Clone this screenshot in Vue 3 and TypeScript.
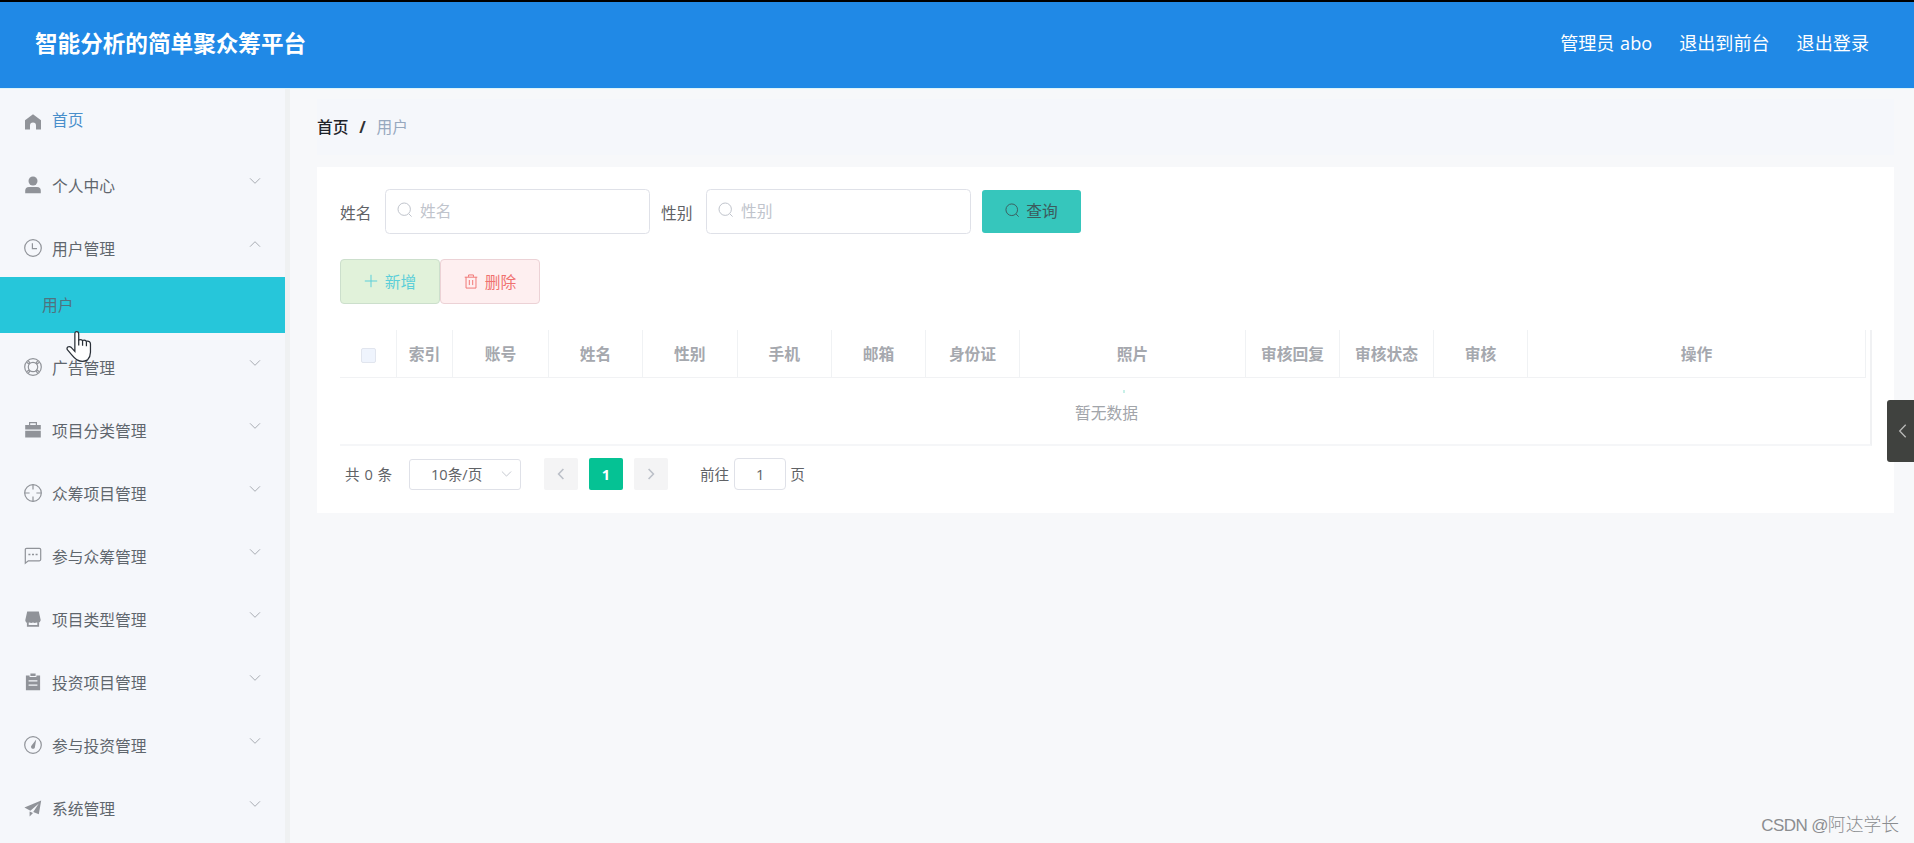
<script setup lang="ts">
import { ref } from 'vue'

interface MenuItem {
  label: string
  icon: string
  open?: boolean
  children?: string[]
}

interface Column {
  label: string
  width: number
}

const menu: MenuItem[] = [
  { label: '个人中心', icon: 'user' },
  { label: '用户管理', icon: 'clock', open: true, children: ['用户'] },
  { label: '广告管理', icon: 'help' },
  { label: '项目分类管理', icon: 'case' },
  { label: '众筹项目管理', icon: 'aim' },
  { label: '参与众筹管理', icon: 'chat' },
  { label: '项目类型管理', icon: 'shop' },
  { label: '投资项目管理', icon: 'order' },
  { label: '参与投资管理', icon: 'odometer' },
  { label: '系统管理', icon: 'promotion' },
]

const columns: Column[] = [
  { label: '索引', width: 56 },
  { label: '账号', width: 96 },
  { label: '姓名', width: 94 },
  { label: '性别', width: 94.5 },
  { label: '手机', width: 94.5 },
  { label: '邮箱', width: 94 },
  { label: '身份证', width: 94 },
  { label: '照片', width: 226 },
  { label: '审核回复', width: 94 },
  { label: '审核状态', width: 94 },
  { label: '审核', width: 94 },
  { label: '操作', width: 338 },
]

const name = ref('')
const gender = ref('')
const page = ref('1')
</script>

<template>
  <div class="app">
    <header class="topbar">
      <h1>智能分析的简单聚众筹平台</h1>
      <nav class="links">
        <span>管理员 abo</span>
        <span>退出到前台</span>
        <span>退出登录</span>
      </nav>
    </header>

    <div class="body">
      <aside class="sidebar">
        <div class="item home">
          <svg class="ico" viewBox="0 0 18 18"><path class="f" d="M9 1.2 17 7.2V16.6H12V12.4A3 3 0 0 0 6 12.4V16.6H1V7.2Z" /></svg>
          <span class="label">首页</span>
        </div>
        <template v-for="item in menu" :key="item.label">
          <div class="item">
            <svg class="ico" viewBox="0 0 18 18">
              <template v-if="item.icon === 'user'">
                <circle class="f" cx="9" cy="5" r="4.5" />
                <path class="f" d="M1.2 17.2V14.8Q1.2 11 5 11H13Q16.8 11 16.8 14.8V17.2Z" />
              </template>
              <template v-else-if="item.icon === 'clock'">
                <circle cx="9" cy="9" r="8.3" /><path d="M8.4 4.2V9.6H13" />
              </template>
              <template v-else-if="item.icon === 'help'">
                <circle cx="9" cy="9" r="8.3" /><circle cx="9" cy="9" r="4.7" />
                <path d="M2.6 4.2 5.4 6.2M4.2 2.6 6.2 5.4M13.8 2.6 11.8 5.4M15.4 4.2 12.6 6.2M2.6 13.8 5.4 11.8M4.2 15.4 6.2 12.6M13.8 15.4 11.8 12.6M15.4 13.8 12.6 11.8" />
              </template>
              <template v-else-if="item.icon === 'case'">
                <path d="M5.6 4.5V1.7H12.4V4.5" />
                <path class="f" d="M1.2 4H16.8V8.6H1.2ZM1.2 9.8H16.8V16.6H1.2Z" />
              </template>
              <template v-else-if="item.icon === 'aim'">
                <circle cx="9" cy="9" r="8.3" /><path d="M9 .7V5.6M9 12.4V17.3M.7 9H5.6M12.4 9H17.3" />
              </template>
              <template v-else-if="item.icon === 'chat'">
                <path d="M1.3 16.2V2.6Q1.3 1.4 2.6 1.4H15.4Q16.7 1.4 16.7 2.6V12.6Q16.7 13.8 15.4 13.8H4.3Z" />
                <path class="f" d="M4.4 6.7H6.4V8.3H4.4ZM8 6.7H10V8.3H8ZM11.6 6.7H13.6V8.3H11.6Z" />
              </template>
              <template v-else-if="item.icon === 'shop'">
                <path class="f" d="M3.2 1.6H14.8L16.8 10.4H1.2ZM1.4 10.2H16.6Q16.2 13 14.2 13L12.6 12.4 10.8 13 9 12.4 7.2 13 5.4 12.4 3.8 13Q1.8 13 1.4 11Z" />
                <path stroke-width="1.8" d="M3.8 12.5V15.8H14.2V12.5" />
              </template>
              <template v-else-if="item.icon === 'order'">
                <path class="f" fill-rule="evenodd" d="M1.9 2.4H5.6V4H12.4V2.4H16.1V17.3H1.9ZM4.6 7.2H13.4V8.4H4.6ZM4.6 11.6H13.4V12.8H4.6ZM6.4.4H11.6V3H6.4Z" />
              </template>
              <template v-else-if="item.icon === 'odometer'">
                <circle cx="9" cy="9" r="8.3" />
                <path class="f" d="M12.2 3.4 11 10.6A2 2 0 1 1 7.6 9.4Z" />
              </template>
              <template v-else>
                <path class="f" d="M.4 8.6 17.2 1.4 14.8 15.2 9.2 13 14.8 4.6 6.4 11.7ZM5.6 12.6 9 14 5.6 17.4Z" />
              </template>
            </svg>
            <span class="label">{{ item.label }}</span>
            <svg class="chev" :class="{ up: item.open }" viewBox="0 0 12 8"><path d="M1 1.3 6 6.3 11 1.3" /></svg>
          </div>
          <template v-if="item.open">
            <div v-for="child in item.children" :key="child" class="sub">{{ child }}</div>
          </template>
        </template>
      </aside>

      <main class="main">
        <div class="crumbs">
          <span class="root">首页</span><span class="sep">/</span><span class="here">用户</span>
        </div>

        <section class="panel">
          <form class="search" @submit.prevent>
            <label>姓名</label>
            <div class="field">
              <svg class="mag" viewBox="0 0 16 16"><circle cx="7.2" cy="7.2" r="6.2" /><path d="M11.8 11.8 14.6 14.6" /></svg>
              <input v-model="name" placeholder="姓名" />
            </div>
            <label>性别</label>
            <div class="field">
              <svg class="mag" viewBox="0 0 16 16"><circle cx="7.2" cy="7.2" r="6.2" /><path d="M11.8 11.8 14.6 14.6" /></svg>
              <input v-model="gender" placeholder="性别" />
            </div>
            <button class="query" type="submit">
              <svg class="mag" viewBox="0 0 16 16"><circle cx="7.2" cy="7.2" r="6.2" /><path d="M11.8 11.8 14.6 14.6" /></svg>
              查询
            </button>
          </form>

          <div class="actions">
            <button class="add">
              <svg viewBox="0 0 14 14"><path d="M7 .8V13.2M.8 7H13.2" /></svg>
              新增
            </button>
            <button class="del">
              <svg viewBox="0 0 14 16"><path d="M.3 3.4H13.7M4.4 3V1H9.6V3M1.7 3.4V15H12.3V3.4M5.2 6.4V11.8M8.8 6.4V11.8" /></svg>
              删除
            </button>
          </div>

          <div class="table">
            <div class="thead">
              <div class="th check"><i class="box"></i></div>
              <div v-for="col in columns" :key="col.label" class="th" :style="{ width: col.width + 'px' }">{{ col.label }}</div>
            </div>
            <div class="empty">暂无数据<i class="speck"></i></div>
          </div>

          <div class="pager">
            <span class="total">共 0 条</span>
            <div class="size">
              <span>10条/页</span>
              <svg viewBox="0 0 12 8"><path d="M1 1.3 6 6.3 11 1.3" /></svg>
            </div>
            <button class="pg"><svg viewBox="0 0 8 12"><path d="M6.4 1 1.6 6 6.4 11" /></svg></button>
            <button class="pg on">1</button>
            <button class="pg"><svg viewBox="0 0 8 12"><path d="M1.6 1 6.4 6 1.6 11" /></svg></button>
            <span class="goto">前往</span>
            <input v-model="page" class="num" />
            <span class="unit">页</span>
          </div>
        </section>
      </main>
    </div>

    <div class="drawer"><svg viewBox="0 0 8 14"><path d="M7.2 .8 1.2 7 7.2 13.2" /></svg></div>
    <svg class="cursor" viewBox="0 0 27 34">
      <path d="M9.2 21.5V3.4Q9.2 1 11.2 1Q13.2 1 13.2 3.4V9.8Q15.4 8.6 17.2 10.2Q19.4 9.2 21.2 11Q23 10.4 24.4 11.6Q25.4 12.6 25.4 14V22.5Q25.4 27 22.4 30.4Q17 33.4 11.5 30.4Q8.6 28.4 6.2 25.4L1.6 20Q.4 18.2 1.8 17Q3.6 15.8 5.6 17.6Z" />
      <path d="M13.2 9.8V15.4M17.2 10.2V15.8M21.2 11V16.2" />
    </svg>
    <div class="mark"><span class="latin">CSDN @</span>阿达学长</div>
  </div>
</template>

<style>
body {
  background: #f7f8fa;
  overflow: hidden;
}
</style>

<style scoped>
* {
  box-sizing: border-box;
}
.app {
  position: relative;
  height: 843px;
  overflow: hidden;
  background: #f7f8fa;
  border-top: 2px solid #000;
  font-family: 'Open Sans', 'Noto Sans CJK SC', sans-serif;
  font-size: 15.75px;
  color: #606266;
}
svg {
  fill: none;
  stroke: currentColor;
  flex: none;
}
input,
button {
  font: inherit;
  outline: none;
  padding: 0;
}
.topbar {
  display: flex;
  align-items: center;
  justify-content: space-between;
  height: 86px;
  padding: 0 45px 2px 35px;
  background: #2089e6;
  color: #fff;
}
h1 {
  margin: 0;
  font-size: 22.6px;
  line-height: 30px;
  font-weight: 700;
}
.links {
  display: flex;
  gap: 27px;
  margin-top: -4px;
  font-size: 18.1px;
  word-spacing: 1px;
}
.body {
  display: flex;
  height: 755px;
  border-top: 1px solid #dcf4fa;
}
.sidebar {
  flex: none;
  width: 290px;
  background: #f5f7fb;
  border-right: 5px solid #eff1f2;
}
.item {
  display: flex;
  align-items: center;
  height: 63px;
  padding: 0 24px;
  color: #5f666d;
}
.home {
  height: 62px;
}
.home .label {
  margin-top: -1px;
  color: #4a8fcb;
}
.home .ico {
  margin-top: 3px;
}
.ico {
  width: 18px;
  height: 18px;
  margin-top: 5px;
  color: #909399;
  stroke-width: 1.2;
}
.ico .f {
  fill: currentColor;
  stroke: none;
}
.label {
  flex: 1;
  margin: 7px 0 0 10px;
  line-height: 24px;
}
.chev {
  width: 12px;
  height: 8px;
  margin: -3px 0 0;
  color: #a9adb3;
}
.chev.up {
  transform: rotate(180deg);
}
.sub {
  height: 56px;
  padding-left: 42px;
  line-height: 57px;
  background: #26c6da;
  color: #50727f;
}
.main {
  flex: 1;
  padding: 10px 20px 0 27px;
}
.crumbs {
  display: flex;
  align-items: center;
  height: 56px;
  background: #f5f7fb;
  line-height: 24px;
}
.root,
.sep {
  font-weight: 700;
  color: #303133;
}
.root {
  font-weight: 500;
  color: #1f2329;
}
.sep {
  width: 28px;
  text-align: center;
}
.here {
  color: #97a8be;
}
.panel {
  height: 346px;
  margin-top: 12px;
  padding: 22px 22px 0 23px;
  background: #fff;
}
.search {
  display: flex;
  align-items: center;
  height: 45px;
}
.search label {
  width: 45px;
  margin-top: 1px;
}
.field {
  display: flex;
  align-items: center;
  width: 265px;
  height: 45px;
  margin-right: 12px;
  padding-left: 11px;
  border: 1px solid #dfe1e8;
  border-radius: 4.5px;
  color: #c0c4cc;
}
.field + label {
  margin-left: -1px;
}
.field input {
  width: 200px;
  margin: -1px 0 0 7px;
  border: 0;
  background: none;
}
.field input::placeholder {
  color: #c0c4cc;
  opacity: 1;
}
.mag {
  width: 16px;
  height: 16px;
  margin-top: -3px;
}
button {
  display: flex;
  align-items: center;
  justify-content: center;
  border: 0;
  cursor: pointer;
}
.query {
  gap: 6px;
  width: 99px;
  height: 43px;
  margin-left: -1px;
  padding-bottom: 2px;
  border-radius: 3px;
  background: #36c6bc;
  color: #3c5b5d;
}
.query .mag {
  width: 15px;
  height: 15px;
  margin-top: 0;
}
.actions {
  display: flex;
  margin: 25px 0 0;
}
.actions button {
  width: 100px;
  height: 45px;
  gap: 7px;
  padding-bottom: 1px;
  border: 1px solid #ccdfcc;
  border-radius: 4px;
}
.actions .add {
  background: #e1f2da;
  color: #5ccfd9;
}
.actions .add svg {
  width: 14px;
  height: 14px;
}
.actions .del {
  background: #feeff0;
  border-color: #ecd2d6;
  color: #f0716f;
}
.actions .del svg {
  width: 14px;
  height: 15px;
}
.table {
  height: 116px;
  width: 1532px;
  margin-top: 26px;
  border-right: 2px solid #f0f1f3;
  border-bottom: 2px solid #f5f6f8;
}
.thead {
  display: flex;
  height: 48px;
  width: 1526px;
  border-bottom: 1px solid #f1f2f4;
}
.th {
  flex: none;
  line-height: 49px;
  text-align: center;
  font-weight: 700;
  color: #a5a8ae;
  border-right: 1px solid #f0f2f4;
}
.check {
  display: flex;
  width: 57px;
  align-items: center;
  justify-content: center;
}
.box {
  width: 15px;
  height: 15px;
  margin: 4px 0 0;
  border: 1px solid #e1e5ee;
  border-radius: 2px;
  background: #eff4fd;
}
.empty {
  position: relative;
  padding-left: 3px;
  line-height: 71px;
  text-align: center;
  color: #a2a5aa;
}
.speck {
  position: absolute;
  left: 783px;
  top: 12px;
  width: 2px;
  height: 3px;
  background: #c8f0e8;
}
.pager {
  display: flex;
  align-items: center;
  height: 32px;
  margin-top: 12px;
  padding-left: 5px;
  font-size: 14.6px;
}
.total {
  width: 64px;
  word-spacing: 1px;
}
.size {
  display: flex;
  align-items: center;
  justify-content: space-between;
  width: 112px;
  height: 31px;
  margin-right: 23px;
  padding: 0 8px 0 21px;
  border: 1px solid #dfe1e8;
  border-radius: 3px;
}
.size span {
  margin-top: -2px;
}
.size svg {
  width: 11px;
  height: 8px;
  color: #c0c4cc;
}
.pg {
  width: 34px;
  height: 32px;
  margin-right: 11px;
  border-radius: 2px;
  background: #f4f4f5;
  color: #bcc0c8;
}
.pg svg {
  width: 8px;
  height: 12px;
  stroke-width: 1.6;
}
.pg.on {
  background: #05c294;
  color: #fff;
  font-weight: 700;
}
.goto {
  margin-left: 21px;
}
.total,
.goto,
.unit {
  margin-top: -1px;
}
.num {
  width: 52px;
  height: 32px;
  margin: 0 4px 0 5px;
  border: 1px solid #dfe1e8;
  border-radius: 4px;
  text-align: center;
  color: #606266;
}
.drawer {
  position: absolute;
  right: 0;
  top: 398px;
  display: flex;
  align-items: center;
  width: 27px;
  height: 62px;
  padding-left: 11px;
  border-radius: 3px 0 0 3px;
  background: #40423f;
  color: #b9bab8;
}
.drawer svg {
  width: 9px;
  height: 14px;
  stroke-width: 1.3;
}
.cursor {
  position: absolute;
  left: 66px;
  top: 328px;
  width: 26px;
  height: 34px;
  color: #2a3038;
  stroke-width: 1.3;
}
.cursor path:first-child {
  fill: #fff;
}
.mark {
  position: absolute;
  right: 15px;
  bottom: 4px;
  font-family: 'Liberation Sans', 'Noto Sans CJK SC', sans-serif;
  font-size: 17.8px;
  line-height: 26px;
  font-weight: 300;
  color: #8b8d90;
}
.latin {
  font-size: 17px;
  letter-spacing: -0.6px;
}
</style>
